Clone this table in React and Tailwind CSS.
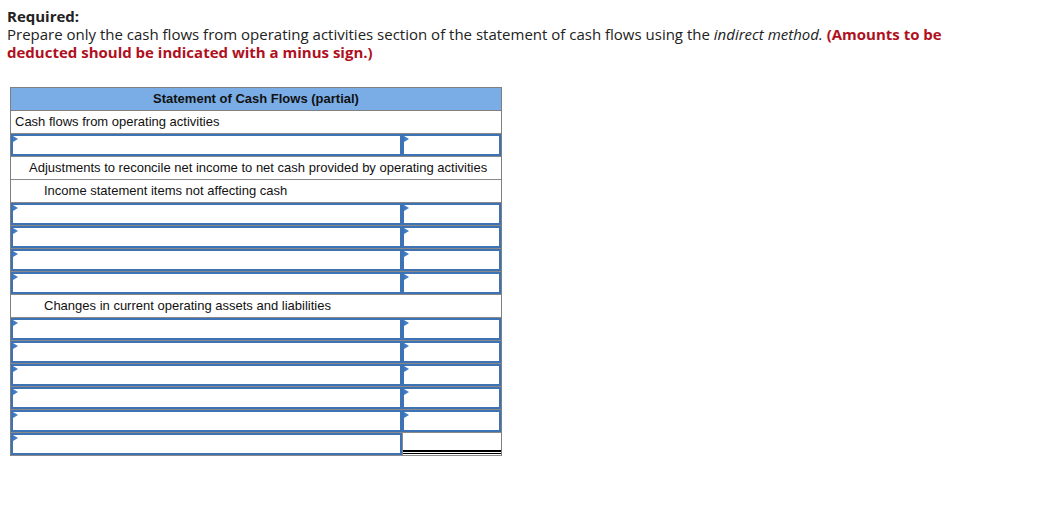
import React from 'react';

// Small blue marker shown in the corner of every entry cell
const Marker = () => (
  <span className="absolute left-0 top-0 w-0 h-0 border-t-[3px] border-b-[3px] border-l-[5px] border-t-transparent border-b-transparent border-l-[#3f7cc8]" />
);

const InputCell = ({ className = '' }) => (
  <div className={`relative h-full border-2 border-[#3d72b4] bg-white ${className}`}>
    <Marker />
  </div>
);

const LabelRow = ({ text, indent = 'pl-1', bold = false }) => (
  <div className={`h-[23px] flex items-center border-b border-[#8a8a8a] ${indent} ${bold ? 'font-bold' : ''}`}>
    {text}
  </div>
);

const InputRow = ({ total = false }) => (
  <div className="h-[23px] flex border-b border-[#8a8a8a]">
    <InputCell className="w-[391px]" />
    {total ? (
      <div className="flex-1 h-full border-l border-[#8a8a8a] flex flex-col justify-end pb-[1px]">
        <div className="h-[4px] border-t-2 border-b border-black" />
      </div>
    ) : (
      <InputCell className="flex-1" />
    )}
  </div>
);

const App = () => {
  return (
    <div className="w-[1063px] h-[508px] bg-white">
      <div className="pl-[7px] pt-[7px] w-[950px] text-[15px] leading-[18px] text-[#222] font-['Open_Sans','Liberation_Sans',sans-serif]">
        <div className="font-bold">Required:</div>
        <div>
          Prepare only the cash flows from operating activities section of the statement of cash flows using the{' '}
          <i>indirect method.</i>{' '}
          <span className="font-bold text-[#b0101e]">
            (Amounts to be deducted should be indicated with a minus sign.)
          </span>
        </div>
      </div>

      <div className="ml-[10px] mt-[26px] w-[492px] border-x border-t border-[#7f7f7f] text-[13px] text-[#111] font-['Liberation_Sans',Arial,sans-serif]">
        <div className="h-[23px] flex items-center justify-center bg-[#7aade6] border-b border-[#7f7f7f] font-bold">
          Statement of Cash Flows (partial)
        </div>
        <LabelRow text="Cash flows from operating activities" />
        <InputRow />
        <LabelRow text="Adjustments to reconcile net income to net cash provided by operating activities" indent="pl-[18px]" />
        <LabelRow text="Income statement items not affecting cash" indent="pl-[33px]" />
        <InputRow />
        <InputRow />
        <InputRow />
        <InputRow />
        <LabelRow text="Changes in current operating assets and liabilities" indent="pl-[33px]" />
        <InputRow />
        <InputRow />
        <InputRow />
        <InputRow />
        <InputRow />
        <InputRow total />
      </div>
    </div>
  );
};

export default App;
